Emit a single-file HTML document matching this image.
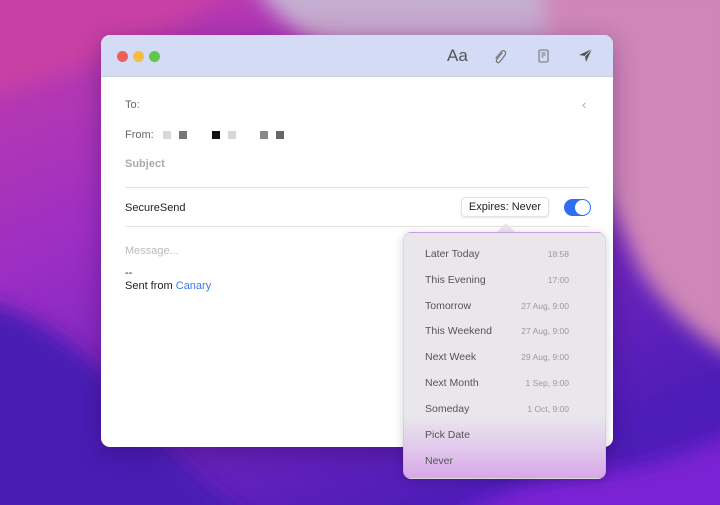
<!DOCTYPE html>
<html><head><meta charset="utf-8"><style>
*{margin:0;padding:0;box-sizing:border-box}
body{width:720px;height:505px;overflow:hidden;position:relative;font-family:"Liberation Sans",sans-serif;background:#7a2ac0}
.bg{position:absolute;inset:0}
.win{position:absolute;left:101px;top:35px;width:512px;height:412px;background:#fff;border-radius:9px;overflow:hidden;box-shadow:0 6px 24px rgba(40,0,80,.35)}
.tb{height:42px;background:#d3dbf5;border-bottom:1px solid #c9cfe6;position:relative}
.dot{position:absolute;top:16px;width:11px;height:11px;border-radius:50%}
.t{position:absolute;font-size:11px;color:#666}
.line{position:absolute;left:24px;right:24px;height:1px;background:#e3e3e3}
.sq{position:absolute;width:8px;height:8px;top:96px}
.pop{position:absolute;left:403px;top:232px;width:203px;height:247px;border-radius:8px;background:linear-gradient(180deg,#e9e6ec 0%,#e9e6ec 75%,#e2cdec 86%,#d7a8e8 100%);box-shadow:0 2px 10px rgba(0,0,0,.18);border:1px solid rgba(0,0,0,.06)}
.arrow{position:absolute;left:496px;top:223px;width:0;height:0;border-left:10px solid transparent;border-right:10px solid transparent;border-bottom:10px solid #e9e6ec}
.it{position:absolute;left:21px;font-size:10.5px;color:#555}
.tm{position:absolute;right:36px;font-size:8.5px;color:#9a9a9a}
</style></head><body>
<svg class="bg" width="720" height="505" viewBox="0 0 720 505">
<defs>
<linearGradient id="g" x1="0" y1="0" x2=".6" y2="1">
<stop offset="0" stop-color="#c43ea6"/><stop offset=".4" stop-color="#9c2ec4"/><stop offset="1" stop-color="#4e1cb8"/></linearGradient>
<linearGradient id="g2" x1="0" y1="0" x2="0" y2="1"><stop offset="0" stop-color="#c4b8d8"/><stop offset="1" stop-color="#c89ac4"/></linearGradient>
<filter id="b"><feGaussianBlur stdDeviation="10"/></filter>
</defs>
<rect width="720" height="505" fill="url(#g)"/>
<g filter="url(#b)">
<path d="M250 -20 Q290 40 340 50 L740 50 L740 -20Z" fill="url(#g2)"/>
<path d="M540 -20 L740 -20 L740 360 Q680 330 640 270 Q600 180 560 120Z" fill="#cf86b8"/>
<path d="M-20 300 Q60 320 130 400 Q180 470 260 525 L-20 525Z" fill="#4a1cb4"/>
<path d="M440 525 Q540 470 620 470 Q680 460 740 430 L740 525Z" fill="#7a24d4"/>
<path d="M-20 -20 L240 -20 Q180 30 100 60 L-20 100Z" fill="#c840a4"/>
</g>
</svg>
<div class="win">
<div class="tb">
<div class="dot" style="left:16px;background:#ee5f57"></div>
<div class="dot" style="left:32px;background:#f4bd3f"></div>
<div class="dot" style="left:48px;background:#5fc74a"></div>
<div style="position:absolute;left:346px;top:11px;font-size:17px;color:#555">Aa</div>
<svg style="position:absolute;left:392px;top:14px" width="14" height="16" viewBox="0 0 14 16"><path d="M9 4 L4 10 Q2.5 12.5 4.5 13.5 Q6 14 7.5 12 L12 6 Q13.5 3.5 11.5 2 Q9.5 1 8 3 L3 9" fill="none" stroke="#777" stroke-width="1.2" stroke-linecap="round"/></svg>
<svg style="position:absolute;left:437px;top:14px" width="11" height="14" viewBox="0 0 11 14"><rect x="1" y="1" width="9" height="12" rx="1.5" fill="none" stroke="#777" stroke-width="1.1"/><path d="M3.5 4h4M3.5 6h4M3.5 8h2" stroke="#777" stroke-width="1"/></svg>
<svg style="position:absolute;left:477px;top:13px" width="15" height="15" viewBox="0 0 15 15"><path d="M1 7 L14 1 L8 14 L7 8 Z" fill="#555"/><path d="M7 8 L14 1" stroke="#d3dbf5" stroke-width=".8"/></svg>
</div>
<div class="t" style="left:24px;top:64px">To:</div>
<div class="t" style="left:481px;top:62px;color:#aaa;font-size:13px">‹</div>
<div class="t" style="left:24px;top:94px">From:</div>
<div class="sq" style="left:62px;background:#d8d8d8"></div>
<div class="sq" style="left:78px;background:#777"></div>
<div class="sq" style="left:111px;background:#111"></div>
<div class="sq" style="left:127px;background:#d8d8d8"></div>
<div class="sq" style="left:159px;background:#888"></div>
<div class="sq" style="left:175px;background:#666"></div>
<div class="t" style="left:24px;top:123px;color:#aaa;font-weight:bold">Subject</div>
<div class="line" style="top:152px"></div>
<div class="t" style="left:24px;top:167px;color:#222">SecureSend</div>
<div style="position:absolute;left:360px;top:162px;width:88px;height:20px;border-radius:4px;border:1px solid #e2e2e2;box-shadow:0 1px 2px rgba(0,0,0,.1);font-size:11px;color:#222;text-align:center;line-height:18px">Expires: Never</div>
<div style="position:absolute;left:463px;top:164px;width:27px;height:17px;border-radius:9px;background:#2f6ef0"><div style="position:absolute;right:1px;top:1px;width:15px;height:15px;border-radius:50%;background:#fff"></div></div>
<div class="line" style="top:191px"></div>
<div class="t" style="left:24px;top:210px;color:#bbb">Message...</div>
<div class="t" style="left:24px;top:232px;color:#222">--</div>
<div class="t" style="left:24px;top:245px;color:#222">Sent from <span style="color:#3a7cf0">Canary</span></div>
</div>
<div class="arrow"></div>
<div class="pop">
<div class="it" style="top:15px">Later Today</div><div class="tm" style="top:16px">18:58</div>
<div class="it" style="top:41px">This Evening</div><div class="tm" style="top:42px">17:00</div>
<div class="it" style="top:67px">Tomorrow</div><div class="tm" style="top:68px">27 Aug, 9:00</div>
<div class="it" style="top:92px">This Weekend</div><div class="tm" style="top:93px">27 Aug, 9:00</div>
<div class="it" style="top:118px">Next Week</div><div class="tm" style="top:119px">29 Aug, 9:00</div>
<div class="it" style="top:144px">Next Month</div><div class="tm" style="top:145px">1 Sep, 9:00</div>
<div class="it" style="top:170px">Someday</div><div class="tm" style="top:171px">1 Oct, 9:00</div>
<div class="it" style="top:196px">Pick Date</div>
<div class="it" style="top:222px">Never</div>
</div>
</body></html>
